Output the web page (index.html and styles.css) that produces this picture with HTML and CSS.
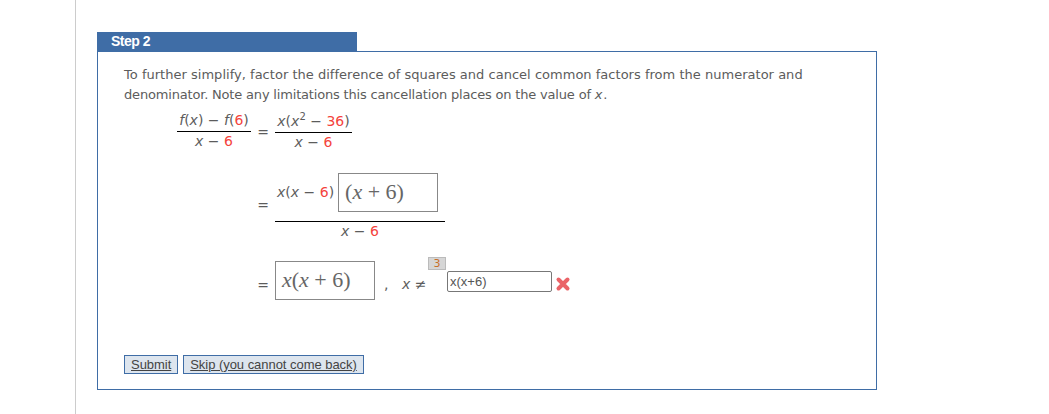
FILE: index.html
```html
<!DOCTYPE html>
<html lang="en">
<head>
    <meta charset="UTF-8">
    <title>Step 2</title>
    <link rel="stylesheet" href="styles.css">
</head>
<body>
    <div class="page">
        <div class="step-title">Step 2</div>
        <div class="step-box">
            <p class="intro">
                <span class="line line-one">To further simplify, factor the difference of squares and cancel common factors from the numerator and</span>
                <span class="line line-two">denominator. Note any limitations this cancellation places on the value of <i>x</i>.</span>
            </p>
            <div class="math">
                <div class="frac frac-lhs">
                    <div class="num"><i>f</i>(<i>x</i>) &minus; <i>f</i>(<span class="red">6</span>)</div>
                    <div class="den"><i>x</i> &minus; <span class="red">6</span></div>
                </div>
                <div class="eq eq-first">=</div>
                <div class="frac frac-first">
                    <div class="num"><i>x</i>(<i>x</i><sup>2</sup> &minus; <span class="red">36</span>)</div>
                    <div class="den"><i>x</i> &minus; <span class="red">6</span></div>
                </div>

                <div class="eq eq-second">=</div>
                <div class="frac frac-second">
                    <div class="num num-box"><span><i>x</i>(<i>x</i> &minus; <span class="red">6</span>)</span><span class="answer"><span class="tex">(<i>x</i> + 6)</span></span></div>
                    <div class="den den-second"><i>x</i> &minus; <span class="red">6</span></div>
                </div>

                <div class="eq eq-third">=</div>
                <div class="last-row">
                    <span class="answer"><span class="tex"><i>x</i>(<i>x</i> + 6)</span></span>
                    <span class="comma">,</span>
                    <span class="neq"><i>x</i> &ne;</span>
                    <span class="entry">
                        <span class="badge">3</span>
                        <input class="textBox" type="text" value="x(x+6)">
                    </span>
                    <svg class="cross" width="16" height="16" viewBox="0 0 16 16">
                        <path d="M3.5 3.5 L12.5 12.5 M12.5 3.5 L3.5 12.5" stroke="#ea6468" stroke-width="4" stroke-linecap="round"/>
                    </svg>
                </div>
            </div>
            <div class="buttons">
                <a class="btn" href="#">Submit</a>
                <a class="btn" href="#">Skip (you cannot come back)</a>
            </div>
        </div>
    </div>
</body>
</html>
```

FILE: styles.css
```css
html, body {
    margin: 0;
    height: 100%;
    background: #fff;
}
body {
    font-family: "DejaVu Sans", sans-serif;
    color: #5c5c5c;
    overflow: hidden;
}
.page {
    margin-left: 75px;
    border-left: 1px solid #ccc;
    height: 100%;
    box-sizing: border-box;
    padding: 32px 0 0 21px;
}
.step-title {
    width: 260px;
    height: 19px;
    box-sizing: border-box;
    padding-left: 14px;
    background: #3f6da6;
    color: #fff;
    font-family: "Liberation Sans", sans-serif;
    font-weight: bold;
    font-size: 14px;
    line-height: 19px;
    letter-spacing: -0.5px;
}
.step-box {
    width: 780px;
    height: 339px;
    box-sizing: border-box;
    border: 1px solid #3f6da6;
    padding: 13px 26px 0;
}
.intro {
    margin: 0;
    font-size: 13px;
    line-height: 20px;
}
.line {
    display: block;
    white-space: nowrap;
}
.line-one {
    letter-spacing: 0.02px;
}
.line-two {
    letter-spacing: -0.18px;
}
.line-two i {
    padding-right: 1px;
}
.red {
    color: #f4433c;
}
.math {
    display: grid;
    grid-template-columns: 74px 24px auto;
    grid-template-rows: 37px 104px auto;
    margin: 8px 0 0 53px;
    font-size: 14px;
    justify-items: start;
}
.frac {
    text-align: center;
}
.num {
    border-bottom: 1px solid #000;
    line-height: 15px;
    height: 18px;
    white-space: nowrap;
}
.den {
    line-height: 18px;
}
.frac-lhs {
    width: 74px;
}
.frac-first {
    width: 77px;
    margin-top: 1px;
}
.num sup {
    font-size: 10px;
    line-height: 0;
}
.eq {
    width: 24px;
    text-align: center;
    align-self: center;
}
.eq-first {
    grid-column: 2;
}
.eq-second {
    grid-column: 2;
    padding-top: 6px;
}
.eq-third {
    grid-column: 2;
    align-self: start;
    padding-top: 23px;
}
.frac-second {
    width: 170px;
    margin-top: 23px;
}
.num-box {
    display: flex;
    align-items: center;
    height: 39px;
    padding: 0 0 9px 2px;
    gap: 4px;
    line-height: 17px;
}
.den-second {
    line-height: 19px;
}
.answer {
    display: block;
    width: 100px;
    height: 39px;
    box-sizing: border-box;
    border: 1px solid #888;
    line-height: 35px;
    text-align: left;
}
.tex {
    font-family: "Liberation Serif", serif;
    font-size: 22px;
    color: #666;
    padding-left: 6px;
}
.last-row {
    grid-column: 3;
    display: flex;
    align-items: center;
    height: 39px;
    margin-top: 7px;
}
.comma {
    margin-left: 9px;
    width: 18px;
    padding-top: 6px;
}
.neq {
    width: 27px;
    white-space: nowrap;
    padding-top: 6px;
}
.entry {
    position: relative;
    display: block;
    margin: 2px 0 0 18px;
}
.badge {
    position: absolute;
    left: -19px;
    top: -14px;
    width: 18px;
    height: 13px;
    background: #d6d6d6;
    border: 1px solid #bbb;
    box-sizing: border-box;
    color: #c8702a;
    font-size: 11px;
    line-height: 12px;
    text-align: center;
}
.textBox {
    display: block;
    width: 105px;
    height: 21px;
    box-sizing: border-box;
    border: 1px solid #777;
    border-radius: 2px;
    padding: 0 2px;
    font-family: "Liberation Sans", sans-serif;
    font-size: 13px;
    color: #555;
    outline: none;
}
.cross {
    margin: 6px 0 0 3px;
}
.buttons {
    display: flex;
    gap: 5px;
    margin-top: 55px;
}
.btn {
    display: block;
    height: 19px;
    box-sizing: border-box;
    padding: 0 6px;
    border: 1px solid #3f6da6;
    background: #dde5ee;
    color: #444;
    font-family: "Liberation Sans", sans-serif;
    font-size: 13px;
    line-height: 17px;
    letter-spacing: -0.04px;
}
```
